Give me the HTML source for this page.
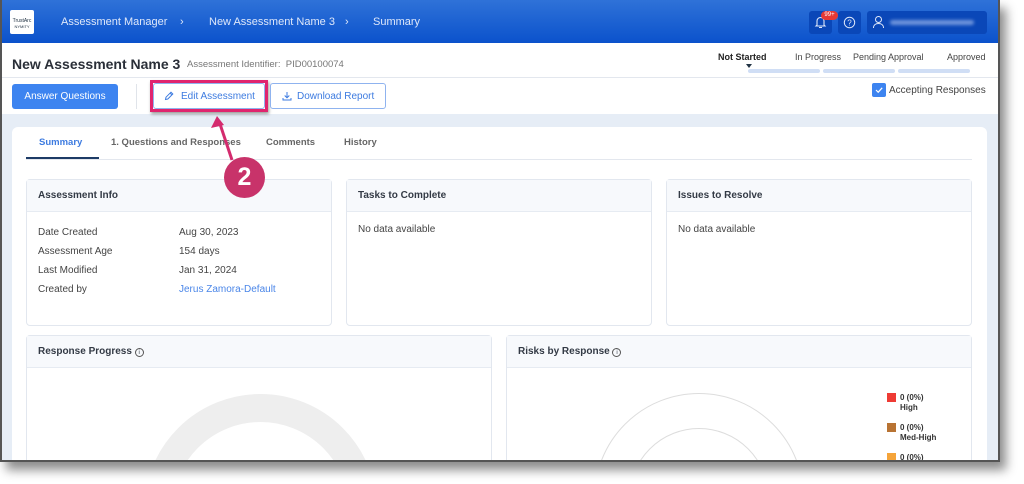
<!DOCTYPE html>
<html><head><meta charset="utf-8"><style>
*{box-sizing:border-box;margin:0;padding:0}
body{width:1024px;height:484px;background:#fff;font-family:"Liberation Sans",sans-serif;position:relative;overflow:hidden}
.frame{position:absolute;left:0;top:0;width:1000px;height:462px;border:2px solid #555;border-top:0;background:#e6edf6;overflow:hidden;box-shadow:6px 8px 10px rgba(0,0,0,.45)}
.in{position:absolute;left:-2px;top:0;width:1000px;height:460px}
.a{position:absolute}
.hdr{left:0;top:0;width:1000px;height:43px;background:linear-gradient(180deg,#2f72d8,#0b52cc)}
.bc{color:#dfe8fa;font-size:11px;top:16px}
.card{background:#fff;border:1px solid #e2e7ef;border-radius:4px}
.ch{background:#f7f9fc;border-bottom:1px solid #e6ebf2;height:32px;font-size:10px;font-weight:bold;color:#333a45;padding:10px 11px}
.t{font-size:10px;color:#444}
</style></head><body>
<div class="frame"><div class="in">
 <div class="a hdr"></div>
 <div class="a" style="left:10px;top:10px;width:24px;height:24px;background:#fff;border-radius:2px;font-size:5px;color:#234;text-align:center;padding-top:8px;line-height:6px">TrustArc<br><span style="font-size:4px">NYMITY</span></div>
 <div class="a bc" style="left:61px">Assessment Manager</div>
 <div class="a bc" style="left:180px">›</div>
 <div class="a bc" style="left:209px">New Assessment Name 3</div>
 <div class="a bc" style="left:345px">›</div>
 <div class="a bc" style="left:373px">Summary</div>
 <div class="a" style="left:809px;top:11px;width:23px;height:23px;background:#0a47b8;border-radius:3px"></div>
 <svg class="a" style="left:814px;top:15px" width="13" height="14" viewBox="0 0 13 14"><path d="M3 10V6a3.5 3.5 0 017 0v4l1 1H2zM5 12.5h3" fill="none" stroke="#dfe8fa" stroke-width="1.1"/></svg>
 <div class="a" style="left:821px;top:11px;width:17px;height:9px;background:#e53935;border-radius:5px;color:#fff;font-size:6px;text-align:center;line-height:9px">99+</div>
 <div class="a" style="left:838px;top:11px;width:23px;height:23px;background:#0a47b8;border-radius:3px"></div>
 <svg class="a" style="left:843px;top:16px" width="13" height="13"><circle cx="6.5" cy="6.5" r="5.2" fill="none" stroke="#dfe8fa" stroke-width="1"/><text x="6.5" y="9.5" font-size="8" text-anchor="middle" fill="#dfe8fa" font-family="Liberation Sans">?</text></svg>
 <div class="a" style="left:867px;top:11px;width:120px;height:23px;background:#0a47b8;border-radius:3px"></div>
 <svg class="a" style="left:872px;top:15px" width="13" height="14"><circle cx="6.5" cy="4.5" r="3" fill="none" stroke="#dfe8fa"/><path d="M1.5 13c0-3 2.2-4.5 5-4.5s5 1.5 5 4.5" fill="none" stroke="#dfe8fa"/></svg>
 <div class="a" style="left:890px;top:20px;width:84px;height:5px;background:#6f95dc;border-radius:3px;filter:blur(1.5px)"></div>

 <div class="a" style="left:0;top:43px;width:1000px;height:71px;background:#fff"></div>
 <div class="a" style="left:0;top:77px;width:1000px;height:1px;background:#e3e7ee"></div>
 <div class="a" style="left:12px;top:56px;font-size:14px;font-weight:bold;color:#2a2f38">New Assessment Name 3</div>
 <div class="a" style="left:187px;top:59px;font-size:9.5px;color:#777">Assessment Identifier:&nbsp; PID00100074</div>
 <div class="a" style="left:718px;top:52px;font-size:9px;font-weight:bold;color:#222">Not Started</div>
 <div class="a" style="left:795px;top:52px;font-size:9px;color:#444">In Progress</div>
 <div class="a" style="left:853px;top:52px;font-size:9px;color:#444">Pending Approval</div>
 <div class="a" style="left:947px;top:52px;font-size:9px;color:#444">Approved</div>
 <div class="a" style="left:746px;top:64px;border-left:3px solid transparent;border-right:3px solid transparent;border-top:4px solid #234"></div>
 <div class="a" style="left:748px;top:69px;width:72px;height:4px;background:#d0def5;border-radius:2px"></div>
 <div class="a" style="left:823px;top:69px;width:72px;height:4px;background:#d0def5;border-radius:2px"></div>
 <div class="a" style="left:898px;top:69px;width:72px;height:4px;background:#d0def5;border-radius:2px"></div>

 <div class="a" style="left:12px;top:84px;width:106px;height:25px;background:#3d84f0;border-radius:3px;color:#fff;font-size:10px;text-align:center;line-height:25px">Answer Questions</div>
 <div class="a" style="left:136px;top:84px;width:1px;height:25px;background:#e0e4ea"></div>
 <div class="a" style="left:150px;top:80px;width:118px;height:32px;border:3px solid #e0246e;box-shadow:1px 2px 3px rgba(0,0,0,.4)"></div>
 <div class="a" style="left:153px;top:83px;width:112px;height:26px;background:#fff;border:1px solid #8fb3ef;border-radius:3px;color:#3d7be0;font-size:10px;line-height:26px;padding-left:27px">Edit Assessment</div>
 <svg class="a" style="left:164px;top:91px" width="10" height="10"><path d="M1.5 8.5l.5-2.3 5-5 1.8 1.8-5 5zM6 2l1.8 1.8" fill="none" stroke="#3d7be0" stroke-width="1"/></svg>
 <div class="a" style="left:270px;top:83px;width:116px;height:26px;background:#fff;border:1px solid #8fb3ef;border-radius:3px;color:#3d7be0;font-size:10px;line-height:26px;padding-left:26px">Download Report</div>
 <svg class="a" style="left:282px;top:91px" width="10" height="10"><path d="M5 1v5.5M2.7 4.5L5 6.8 7.3 4.5M1 7v2h8V7" fill="none" stroke="#3d7be0" stroke-width="1"/></svg>
 <div class="a" style="left:872px;top:83px;width:14px;height:14px;background:#3d84f0;border-radius:2px"></div>
 <svg class="a" style="left:874px;top:85px" width="10" height="10"><path d="M2 5l2.2 2.2L8.2 2.8" fill="none" stroke="#fff" stroke-width="1.2"/></svg>
 <div class="a" style="left:889px;top:85px;font-size:10px;color:#444">Accepting Responses</div>

 <div class="a" style="left:12px;top:127px;width:975px;height:333px;background:#fff;border-radius:6px 6px 0 0"></div>
 <div class="a" style="left:39px;top:137px;font-size:9.5px;font-weight:bold;color:#3d7be0">Summary</div>
 <div class="a" style="left:111px;top:137px;font-size:9.5px;font-weight:bold;color:#666">1. Questions and Responses</div>
 <div class="a" style="left:266px;top:137px;font-size:9.5px;font-weight:bold;color:#666">Comments</div>
 <div class="a" style="left:344px;top:137px;font-size:9.5px;font-weight:bold;color:#666">History</div>
 <div class="a" style="left:26px;top:159px;width:946px;height:1px;background:#e3e7ee"></div>
 <div class="a" style="left:26px;top:157px;width:73px;height:2px;background:#1d3b66"></div>

 <div class="a card" style="left:26px;top:179px;width:306px;height:147px"><div class="ch">Assessment Info</div></div>
 <div class="a t" style="left:38px;top:227px">Date Created</div><div class="a t" style="left:179px;top:227px">Aug 30, 2023</div>
 <div class="a t" style="left:38px;top:246px">Assessment Age</div><div class="a t" style="left:179px;top:246px">154 days</div>
 <div class="a t" style="left:38px;top:265px">Last Modified</div><div class="a t" style="left:179px;top:265px">Jan 31, 2024</div>
 <div class="a t" style="left:38px;top:284px">Created by</div><div class="a t" style="left:179px;top:284px;color:#4a86e8">Jerus Zamora-Default</div>
 <div class="a card" style="left:346px;top:179px;width:306px;height:147px"><div class="ch">Tasks to Complete</div></div>
 <div class="a t" style="left:358px;top:224px">No data available</div>
 <div class="a card" style="left:666px;top:179px;width:306px;height:147px"><div class="ch">Issues to Resolve</div></div>
 <div class="a t" style="left:678px;top:224px">No data available</div>

 <div class="a card" style="left:26px;top:335px;width:466px;height:130px"><div class="ch">Response Progress <span style="font-weight:normal;border:1px solid #555;border-radius:50%;display:inline-block;width:9px;height:9px;font-size:6px;text-align:center;line-height:8px">i</span></div></div>
 <div class="a" style="left:144px;top:394px;width:233px;height:233px;border-radius:50%;border:28px solid #eeeeee"></div>
 <div class="a card" style="left:506px;top:335px;width:466px;height:130px"><div class="ch">Risks by Response <span style="font-weight:normal;border:1px solid #555;border-radius:50%;display:inline-block;width:9px;height:9px;font-size:6px;text-align:center;line-height:8px">i</span></div></div>
 <div class="a" style="left:594px;top:393px;width:210px;height:210px;border-radius:50%;border:1px solid #ddd"></div>
 <div class="a" style="left:629px;top:428px;width:140px;height:140px;border-radius:50%;border:1px solid #ddd"></div>
 <div class="a" style="left:887px;top:393px;width:9px;height:9px;background:#ee3b34"></div>
 <div class="a" style="left:900px;top:393px;font-size:8px;color:#333;font-weight:bold;line-height:10px">0 (0%)<br>High</div>
 <div class="a" style="left:887px;top:423px;width:9px;height:9px;background:#b87333"></div>
 <div class="a" style="left:900px;top:423px;font-size:8px;color:#333;font-weight:bold;line-height:10px">0 (0%)<br>Med-High</div>
 <div class="a" style="left:887px;top:453px;width:9px;height:9px;background:#f5a43a"></div>
 <div class="a" style="left:900px;top:453px;font-size:8px;color:#333;font-weight:bold;line-height:10px">0 (0%)</div>

 <svg class="a" style="left:0;top:0" width="1000" height="460"><path d="M232 160L220 124" stroke="#d42b6e" stroke-width="3" fill="none"/><path d="M217 116l-6 12 13-3z" fill="#d42b6e"/></svg>
 <div class="a" style="left:224px;top:157px;width:41px;height:41px;border-radius:50%;background:#c8336a;color:#fff;font-size:25px;font-weight:bold;text-align:center;line-height:41px">2</div>
</div></div>
</body></html>
